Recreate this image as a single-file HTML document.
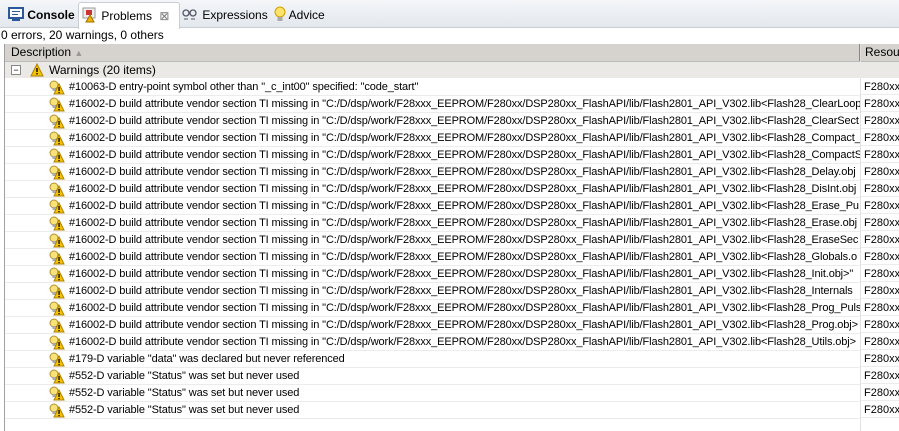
<!DOCTYPE html>
<html><head><style>
body{margin:0;width:899px;height:431px;overflow:hidden;background:#fff;font-family:"Liberation Sans",sans-serif;font-size:12px;color:#000;position:relative}
.tabs{position:absolute;left:0;top:0;width:899px;height:27px;background:linear-gradient(#f4f6f9,#e3e8ee);border-bottom:1px solid #c9ced6}
.tab{position:absolute;top:4px;height:22px;line-height:22px;font-size:12px}
.active{background:#fff;border:1px solid #c9ced6;border-bottom:none;border-radius:3px 3px 0 0;top:2px;height:26px;line-height:26px}
.sum{position:absolute;left:1px;top:28px;line-height:15px}
.hdr{position:absolute;left:5px;top:44px;width:894px;height:17px;background:#d6d3ce;border-bottom:1px solid #bbb}
.row{position:absolute;left:5px;width:855px;height:16px;border-bottom:1px solid #ececec;line-height:16px;white-space:nowrap;overflow:hidden}
.res{position:absolute;left:861px;width:38px;height:16px;border-bottom:1px solid #ececec;line-height:16px;overflow:hidden;white-space:nowrap;padding-left:3px;box-sizing:border-box;font-size:11px}
.ic{position:absolute;left:44px;top:1px}
.t{position:absolute;left:64px;font-size:11px;letter-spacing:-0.12px}
.vl{position:absolute;left:4px;top:44px;width:1px;height:387px;background:#a0a0a0}
.cd{position:absolute;left:860px;top:44px;width:1px;height:387px;background:#e0e0e0}
</style></head><body>
<div class="tabs">
 <div class="tab" style="left:8px"><svg width="16" height="16" style="vertical-align:-3px"><rect x="1" y="2" width="14" height="10" fill="#fff" stroke="#2a5a9a" stroke-width="2"/><rect x="4" y="5" width="8" height="1" fill="#2a5a9a"/><rect x="4" y="8" width="6" height="1" fill="#2a5a9a"/><rect x="4" y="13" width="8" height="2" fill="#2a5a9a"/></svg> <b>Console</b></div>
 <div class="tab active" style="left:78px;width:97px;padding-left:3px"><svg width="16" height="16" style="vertical-align:-3px"><rect x="1" y="1" width="12" height="10" fill="#eee" stroke="#999"/><rect x="4" y="3" width="6" height="5" fill="#c33"/><path d="M4 15 L8 8 L12 15Z" fill="#f0b400" stroke="#a07000"/></svg> Problems <span style="color:#777;margin-left:4px">⊠</span></div>
 <div class="tab" style="left:181px"><svg width="18" height="14" style="vertical-align:-2px"><circle cx="5" cy="6" r="3" fill="none" stroke="#556" stroke-width="1.3"/><circle cx="12" cy="6" r="3" fill="none" stroke="#556" stroke-width="1.3"/><path d="M3 12h4M10 12h4" stroke="#556"/></svg> Expressions</div>
 <div class="tab" style="left:274px"><svg width="12" height="16" style="vertical-align:-3px"><circle cx="6" cy="6" r="5" fill="#fde36a" stroke="#d0a000"/><rect x="3.5" y="11" width="5" height="4" fill="#aaa"/></svg> Advice</div>
</div>
<div class="sum">0 errors, 20 warnings, 0 others</div>
<div class="hdr"><span style="position:absolute;left:6px;line-height:17px">Description <span style="color:#999;font-size:9px">▲</span></span><div style="position:absolute;left:854px;top:0;width:1px;height:17px;background:#888"></div><span style="position:absolute;left:860px;line-height:17px">Resour</span></div>
<div class="vl"></div><div class="cd"></div>
<div style="position:absolute;left:5px;top:62px;width:894px;height:16px;background:#ebe9e6;line-height:16px"><span style="position:absolute;left:6px;top:3px;width:8px;height:8px;border:1px solid #888;background:#fff;font-size:9px;line-height:8px;text-align:center">−</span><svg style="position:absolute;left:25px;top:1px" width="14" height="14"><path d="M7 1 L13 13 L1 13Z" fill="#f5c400" stroke="#b08000"/><rect x="6.3" y="5" width="1.4" height="4" fill="#000"/><rect x="6.3" y="10" width="1.4" height="1.4" fill="#000"/></svg><span style="position:absolute;left:44px">Warnings (20 items)</span></div>
<div id="rows"></div>
<script>
var p='#16002-D build attribute vendor section TI missing in "C:/D/dsp/work/F28xxx_EEPROM/F280xx/DSP280xx_FlashAPI/lib/Flash2801_API_V302.lib<';
var items=['#10063-D entry-point symbol other than "_c_int00" specified:  "code_start"',
p+'Flash28_ClearLoop',p+'Flash28_ClearSect',p+'Flash28_Compact_',p+'Flash28_CompactS',p+'Flash28_Delay.obj',p+'Flash28_DisInt.obj',p+'Flash28_Erase_Pu',p+'Flash28_Erase.obj',p+'Flash28_EraseSec',p+'Flash28_Globals.o',p+'Flash28_Init.obj>"',p+'Flash28_Internals',p+'Flash28_Prog_Puls',p+'Flash28_Prog.obj>',p+'Flash28_Utils.obj>',
'#179-D variable "data" was declared but never referenced','#552-D variable "Status" was set but never used','#552-D variable "Status" was set but never used','#552-D variable "Status" was set but never used'];
var ic='<svg class="ic" width="16" height="15"><circle cx="5" cy="5" r="4" fill="#f8e27a" stroke="#b09030"/><rect x="3.5" y="8" width="3" height="3" fill="#aaa"/><path d="M10 4 L15 14 L5 14Z" fill="#f5c400" stroke="#b08000"/><rect x="9.4" y="7" width="1.3" height="4" fill="#000"/><rect x="9.4" y="12" width="1.3" height="1.2" fill="#000"/></svg>';
var h='';
for(var i=0;i<items.length;i++){var y=79+17*i;
h+='<div class="row" style="top:'+y+'px">'+ic+'<span class="t"></span></div><div class="res" style="top:'+y+'px">F280xx</div>';}
document.getElementById('rows').innerHTML=h;
var ts=document.querySelectorAll('.t');for(var i=0;i<ts.length;i++)ts[i].textContent=items[i];
</script>
</body></html>
